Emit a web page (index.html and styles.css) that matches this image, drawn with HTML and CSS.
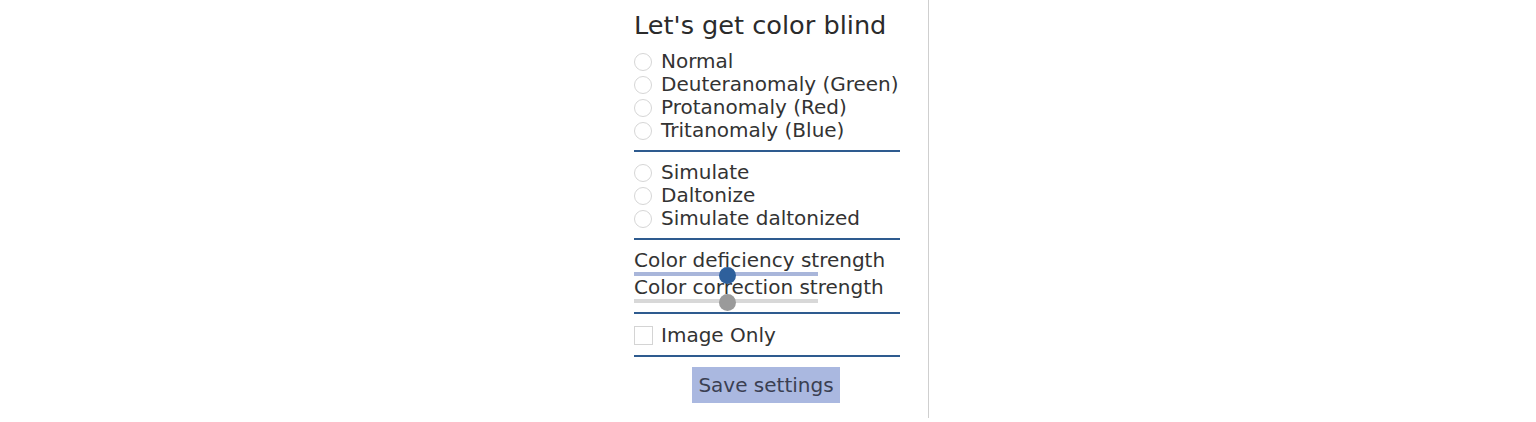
FILE: index.html
```html
<!DOCTYPE html>
<html>
<head>
<meta charset="utf-8">
<link rel="stylesheet" href="styles.css">
</head>
<body>
<div class="panel">
  <h1 class="title">Let's get color blind</h1>
  <div class="group">
    <label class="opt"><span class="radio"></span>Normal</label>
    <label class="opt"><span class="radio"></span>Deuteranomaly (Green)</label>
    <label class="opt"><span class="radio"></span>Protanomaly (Red)</label>
    <label class="opt"><span class="radio"></span>Tritanomaly (Blue)</label>
  </div>
  <div class="sep"></div>
  <div class="group">
    <label class="opt"><span class="radio"></span>Simulate</label>
    <label class="opt"><span class="radio"></span>Daltonize</label>
    <label class="opt"><span class="radio"></span>Simulate daltonized</label>
  </div>
  <div class="sep sep-b"></div>
  <div class="sliders">
    <div class="slabel">Color deficiency strength</div>
    <div class="slider blue"><span class="thumb"></span></div>
    <div class="slabel">Color correction strength</div>
    <div class="slider grey"><span class="thumb"></span></div>
  </div>
  <div class="sep sep-c"></div>
  <label class="opt check-row"><span class="checkbox"></span>Image Only</label>
  <div class="sep sep-d"></div>
  <div class="actions"><button class="save">Save settings</button></div>
</div>
</body>
</html>
```
FILE: styles.css
```css
html, body {
  margin: 0;
  padding: 0;
  background: #ffffff;
}
body {
  font-family: "DejaVu Sans", Verdana, sans-serif;
  color: #333333;
}
.panel {
  margin-left: 634px;
  width: 266px;
  padding: 12px 28px 0 0;
  height: 406px;
  border-right: 1px solid #cfcfcf;
}
.title {
  margin: 0 0 12px 0;
  font-size: 25.6px;
  font-weight: normal;
  line-height: 26px;
  color: #2b2b2b;
  white-space: nowrap;
}
.group {
  display: flex;
  flex-direction: column;
}
.opt {
  display: flex;
  align-items: center;
  font-size: 20px;
  line-height: 23px;
  height: 23px;
  white-space: nowrap;
  color: #333;
}
.radio {
  width: 16px;
  height: 16px;
  border: 1px solid #d6d6d6;
  border-radius: 50%;
  margin-right: 9px;
  flex: none;
}
.sep {
  height: 2px;
  background: #2e5b8f;
  margin: 8px 0 9px 0;
}
.sep-b {
  margin: 8px 0 9px 0;
}
.sliders {
  display: flex;
  flex-direction: column;
}
.slabel {
  font-size: 20px;
  line-height: 23px;
  height: 23px;
  white-space: nowrap;
  color: #333;
}
.slider {
  position: relative;
  width: 184px;
  height: 4px;
  margin: 0 0 0 0;
}
.slider.blue { background: #a9b6da; }
.slider.grey { background: #d8d8d8; }
.thumb {
  position: absolute;
  left: 85px;
  top: -5px;
  width: 17px;
  height: 17px;
  border-radius: 50%;
}
.blue .thumb { background: #2e609c; }
.grey .thumb { background: #9a9a9a; }
.sep-c {
  margin: 9px 0 10px 0;
}
.check-row {
  height: 22px;
}
.checkbox {
  width: 17px;
  height: 17px;
  border: 1px solid #d4d4d4;
  margin-right: 8px;
  flex: none;
}
.sep-d {
  margin: 9px 0 10px 0;
}
.actions {
  display: flex;
  justify-content: center;
}
.save {
  font-family: "DejaVu Sans", Verdana, sans-serif;
  font-size: 20px;
  color: #3a3f52;
  background: #aab8e0;
  border: none;
  width: 148px;
  height: 36px;
  padding: 0;
  margin-left: -2px;
}
```
